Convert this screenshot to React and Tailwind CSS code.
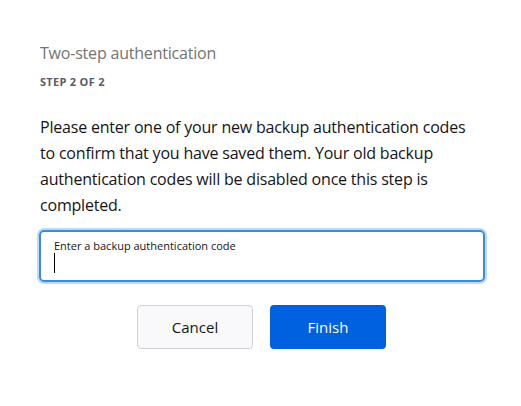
export default function App() {
  return (
    <div className="w-[521px] h-[406px] bg-white" style={{ fontFamily: '"Open Sans", "Noto Sans", sans-serif' }}>
      <div className="pt-[42px] pl-[40px] pr-[20px]">
        <div className="text-[16px] leading-[22px] text-[#737373] tracking-[-0.2px]">Two-step authentication</div>
        <div className="mt-[11px] text-[11px] leading-[14px] font-bold text-[#5b5b66] tracking-[0.3px]">STEP 2 OF 2</div>
        <p className="mt-[25px] text-[16px] leading-[26px] text-[#15141a] tracking-[-0.2px]">
          Please enter one of your new backup authentication codes<br />
          to confirm that you have saved them. Your old backup<br />
          authentication codes will be disabled once this step is<br />
          completed.
        </p>
      </div>
      <div className="mt-[12px] ml-[39px] w-[446px] h-[52px] rounded-[5px] border-2 border-[#3a8bd8] shadow-[0_0_0_2px_#bcd9f5] pl-[13px] pr-[12px] pt-[7px]">
        <div className="text-[11px] leading-[14px] text-[#15141a]">Enter a backup authentication code</div>
        <div className="w-px h-[20px] bg-black"></div>
      </div>
      <div className="mt-[23px] flex justify-center gap-[17px] pl-[2px]">
        <button className="w-[116px] h-[44px] rounded-[4px] border border-[#cfcfd8] bg-[#f9f9fb] text-[15px] text-[#15141a]">Cancel</button>
        <button className="w-[116px] h-[44px] rounded-[4px] bg-[#0061e0] text-[15px] text-white">Finish</button>
      </div>
    </div>
  );
}
